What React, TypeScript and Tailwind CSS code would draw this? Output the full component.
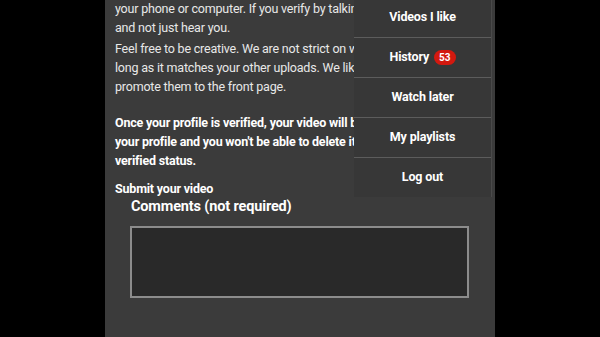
import React from "react";

const menuItems = ["Videos I like", "History", "Watch later", "My playlists", "Log out"];

export default function App() {
  return (
    <main className="flex h-[337px] w-[600px] justify-center overflow-hidden bg-black font-['Roboto',sans-serif]">
      <section className="relative h-full w-[390px] overflow-hidden bg-[#3b3b3b] pl-[10px]">
        <div className="-mt-[1.5px] text-[12.5px] leading-[19px] tracking-[-0.2px] text-[#e8e8e8]">
          <p className="whitespace-nowrap">your phone or computer. If you verify by talking, make sure we can see</p>
          <p className="whitespace-nowrap">and not just hear you.</p>
          <p className="mt-[2px] whitespace-nowrap">Feel free to be creative. We are not strict on what you upload as</p>
          <p className="whitespace-nowrap">long as it matches your other uploads. We like good videos and will</p>
          <p className="whitespace-nowrap">promote them to the front page.</p>

          <div className="mt-[17px] font-bold text-white">
            <p className="whitespace-nowrap">Once your profile is verified, your video will be public on</p>
            <p className="whitespace-nowrap">your profile and you won't be able to delete it without losing</p>
            <p className="whitespace-nowrap">verified status.</p>
          </div>

          <p className="mt-[9px] font-bold text-white">Submit your video</p>
        </div>

        <div className="pl-[16px]">
          <label className="block text-[14.5px] font-bold leading-[18px] tracking-[-0.15px] text-white">
            Comments (not required)
          </label>
          <div className="ml-[-1px] mt-[10px] h-[72px] w-[339px] border-2 border-[#8c8c8c] bg-[#292929]" />
        </div>

        <nav className="absolute left-[249px] top-[-2px] w-[138px] border-r border-[#4a4a4a] bg-[#373737]">
          {menuItems.map((item, i) => (
            <div
              key={item}
              className={
                "flex h-[39px] items-center justify-center gap-[5px] text-[12.5px] font-bold tracking-[-0.15px] text-white " +
                (i < menuItems.length - 1 ? "box-content border-b border-[#5c5c5c]" : "")
              }
            >
              <span>{item}</span>
              {item === "History" && (
                <span className="rounded-full bg-[#d3190f] px-[5px] text-[10px] leading-[15px] font-bold tracking-normal text-white">
                  53
                </span>
              )}
            </div>
          ))}
        </nav>
      </section>
    </main>
  );
}
